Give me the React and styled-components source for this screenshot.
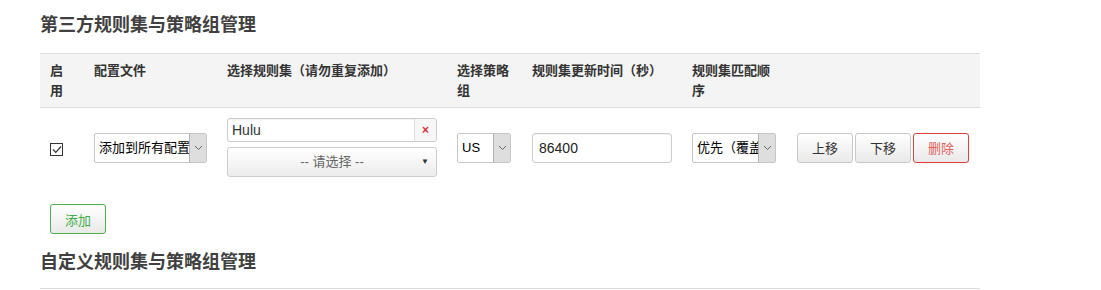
import React from "react";
import styled, { createGlobalStyle } from "styled-components";

const GlobalStyle = createGlobalStyle`
  html, body { margin: 0; padding: 0; background: #fff; }
  body {
    font-family: "Liberation Sans", "Noto Sans CJK SC", sans-serif;
    font-size: 13px;
    color: #333;
  }
  * { box-sizing: border-box; }
`;

const Page = styled.div`
  padding: 13px 40px 0;
  width: 1101px;
`;

const SectionTitle = styled.h3`
  margin: ${(p) => (p.$first ? "0" : "16px 0 0")};
  font-size: 18px;
  line-height: 24px;
  font-weight: bold;
  color: #404040;
`;

const Table = styled.table`
  width: 940px;
  margin-top: 16px;
  border-collapse: collapse;
  table-layout: fixed;
  border-top: 1px solid #dcdcdc;
`;

const Th = styled.th`
  background: #f4f4f4;
  border-bottom: 1px solid #dcdcdc;
  padding: 7px 10px 6px;
  text-align: left;
  vertical-align: top;
  font-size: 13px;
  line-height: 20px;
  font-weight: bold;
  color: #333;
`;

const Td = styled.td`
  padding: 10px 10px;
  vertical-align: middle;
`;

const Check = styled.span`
  display: inline-flex;
  align-items: center;
  justify-content: center;
  width: 13px;
  height: 13px;
  border: 1px solid #333;
  background: #fff;
  vertical-align: middle;
  margin-top: 2px;
`;

const SelectBox = styled.div`
  display: flex;
  width: ${(p) => p.$w}px;
  height: 30px;
  border: 1px solid #c6c6c6;
  border-radius: 2px;
  background: #fff;
  overflow: hidden;
`;

const SelectValue = styled.span`
  flex: 1;
  min-width: 0;
  overflow: hidden;
  white-space: nowrap;
  padding-left: 4px;
  line-height: 28px;
  font-size: 13px;
  color: #000;
`;

const SelectArrow = styled.span`
  flex: none;
  width: 17px;
  display: flex;
  align-items: center;
  justify-content: center;
  background: #dedede;
  border-left: 1px solid #b4b4b4;
`;

const TagInput = styled.div`
  display: flex;
  width: 210px;
  height: 24px;
  border: 1px solid #ccc;
  border-radius: 3px;
  background: #fff;
  overflow: hidden;
  box-shadow: inset 0 1px 1px rgba(0, 0, 0, 0.05);
`;

const TagText = styled.span`
  flex: 1;
  padding-left: 4px;
  line-height: 22px;
  font-size: 14px;
  color: #333;
`;

const TagClear = styled.span`
  width: 22px;
  border-left: 1px solid #ddd;
  background: #f7f7f7;
  display: flex;
  align-items: center;
  justify-content: center;
  color: #d9303a;
  font-weight: bold;
  font-size: 12px;
`;

const Dropdown = styled.div`
  position: relative;
  margin-top: 5px;
  width: 210px;
  height: 30px;
  border: 1px solid #ccc;
  border-radius: 3px;
  background: linear-gradient(#fff, #ececec);
  text-align: center;
  line-height: 28px;
  font-size: 13px;
  color: #666;
`;

const Caret = styled.span`
  position: absolute;
  right: 7px;
  top: 0;
  font-size: 8px;
  color: #333;
`;

const TextInput = styled.div`
  width: 140px;
  height: 30px;
  border: 1px solid #ccc;
  border-radius: 3px;
  padding-left: 6px;
  line-height: 28px;
  font-size: 14px;
  color: #222;
  box-shadow: inset 0 1px 1px rgba(0, 0, 0, 0.06);
`;

const Actions = styled.div`
  display: flex;
  gap: 2px;
`;

const Button = styled.button`
  width: 56px;
  height: 30px;
  padding: 0;
  border: 1px solid ${(p) => p.$border || "#c8c8c8"};
  border-radius: 3px;
  background: linear-gradient(#fff, #e9e9e9);
  font-family: inherit;
  font-size: 13px;
  color: ${(p) => p.$color || "#333"};
  cursor: pointer;
`;

const AddRow = styled.div`
  margin-top: 17px;
  padding-left: 10px;
`;

const Divider = styled.div`
  margin-top: 14px;
  width: 940px;
  border-top: 1px solid #dcdcdc;
`;

const Chevron = () => (
  <svg width="9" height="6" viewBox="0 0 9 6">
    <path d="M1 1 L4.5 4.5 L8 1" fill="none" stroke="#666" strokeWidth="1" />
  </svg>
);

const Select = ({ w, value }) => (
  <SelectBox $w={w}>
    <SelectValue>{value}</SelectValue>
    <SelectArrow>
      <Chevron />
    </SelectArrow>
  </SelectBox>
);

const headers = [
  { label: "启用", w: 44 },
  { label: "配置文件", w: 133 },
  { label: "选择规则集（请勿重复添加）", w: 230 },
  { label: "选择策略组", w: 75 },
  { label: "规则集更新时间（秒）", w: 160 },
  { label: "规则集匹配顺序", w: 105 },
  { label: "", w: 193 },
];

export default function App() {
  return (
    <>
      <GlobalStyle />
      <Page>
        <SectionTitle $first>第三方规则集与策略组管理</SectionTitle>
        <Table>
          <colgroup>
            {headers.map((h, i) => (
              <col key={i} style={{ width: h.w }} />
            ))}
          </colgroup>
          <thead>
            <tr>
              {headers.map((h, i) => (
                <Th key={i}>{h.label}</Th>
              ))}
            </tr>
          </thead>
          <tbody>
            <tr>
              <Td>
                <Check>
                  <svg width="10" height="9" viewBox="0 0 10 9">
                    <path d="M1 4.5 L3.8 7.3 L9 1.5" fill="none" stroke="#333" strokeWidth="1.2" />
                  </svg>
                </Check>
              </Td>
              <Td>
                <Select w={113} value="添加到所有配置" />
              </Td>
              <Td>
                <TagInput>
                  <TagText>Hulu</TagText>
                  <TagClear>×</TagClear>
                </TagInput>
                <Dropdown>
                  -- 请选择 --
                  <Caret>▼</Caret>
                </Dropdown>
              </Td>
              <Td>
                <Select w={54} value="US" />
              </Td>
              <Td>
                <TextInput>86400</TextInput>
              </Td>
              <Td>
                <Select w={84} value="优先（覆盖" />
              </Td>
              <Td>
                <Actions>
                  <Button>上移</Button>
                  <Button>下移</Button>
                  <Button $border="#d9403f" $color="#e0605a">删除</Button>
                </Actions>
              </Td>
            </tr>
          </tbody>
        </Table>
        <AddRow>
          <Button $border="#4cb050" $color="#3fae49">添加</Button>
        </AddRow>
        <SectionTitle>自定义规则集与策略组管理</SectionTitle>
        <Divider />
      </Page>
    </>
  );
}
